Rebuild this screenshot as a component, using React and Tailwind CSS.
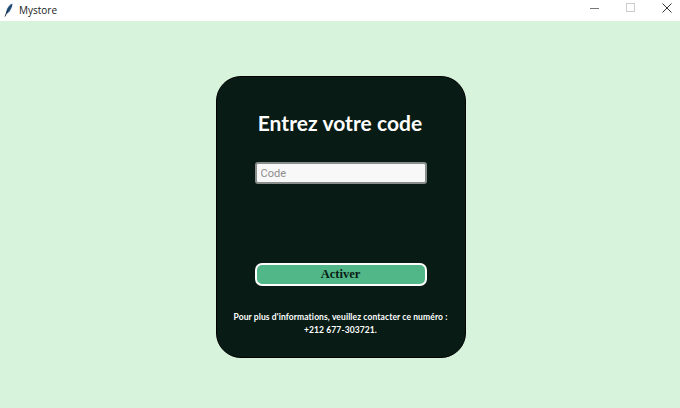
export default function App() {
  return (
    <div className="flex h-[408px] w-[680px] flex-col overflow-hidden bg-[#d8f3dc] font-['Liberation_Sans',sans-serif]">
      <header className="flex h-[21px] shrink-0 items-center bg-white">
        <svg width="10" height="14" viewBox="0 0 10 14" className="ml-[4px] mb-[2px]">
          <path d="M8.5 0.5C5.5 1.5 3 4.5 2.2 8.5L1.8 11.2L3.6 10.2C6.4 8.2 8.4 4.5 8.5 0.5Z" fill="#2f5d8c" />
          <path d="M7.5 2.5C5 5 3 8.5 1 13.5" fill="none" stroke="#14263a" strokeWidth="0.9" />
        </svg>
        <span className="ml-[5px] mb-[2px] font-['Open_Sans',sans-serif] text-[10px] leading-none text-[#222]">Mystore</span>
        <div className="mb-[5px] ml-auto flex items-center">
          <svg width="10" height="10" viewBox="0 0 10 10" className="mr-[26px]">
            <path d="M0 5.5H9" stroke="#777" strokeWidth="1" />
          </svg>
          <svg width="10" height="10" viewBox="0 0 10 10" className="mr-[26px]">
            <rect x="0.5" y="0.5" width="8" height="8" fill="none" stroke="#ccc" strokeWidth="1" />
          </svg>
          <svg width="10" height="10" viewBox="0 0 10 10" className="mr-[8px]">
            <path d="M0.5 0.5L9.5 9.5M9.5 0.5L0.5 9.5" stroke="#333" strokeWidth="1" />
          </svg>
        </div>
      </header>
      <main className="flex flex-1 items-start justify-center pl-[2px] pt-[55px]">
        <section className="flex h-[282px] w-[250px] flex-col items-center rounded-[25px] border border-black bg-[#081c15]">
          <h1 className="mt-[33px] mr-[2px] font-['Lato',sans-serif] text-[21px] font-bold leading-[26px] tracking-[0.05px] text-white">Entrez votre code</h1>
          <input
            placeholder="Code"
            readOnly
            className="mt-[26px] mr-[1px] h-[22px] w-[172px] rounded-[3px] border-2 border-[#8a8f8c] bg-[#f8f8f8] px-[4px] font-['Roboto',sans-serif] text-[11px] text-[#333] outline-none placeholder:text-[#8d8d8d]"
          />
          <button className="mt-[79px] mr-[1px] h-[23px] w-[172px] rounded-[7px] border-2 border-white bg-[#52b788] font-['Liberation_Serif',serif] text-[12.5px] font-bold leading-none text-[#081c15]">
            Activer
          </button>
          <p className="mt-[25px] mr-[1px] text-center font-['Lato',sans-serif] text-[8.5px] font-bold leading-[13px] tracking-[0.1px] text-white">
            Pour plus d'informations, veuillez contacter ce numéro :
            <br />
            +212 677-303721.
          </p>
        </section>
      </main>
    </div>
  );
}
